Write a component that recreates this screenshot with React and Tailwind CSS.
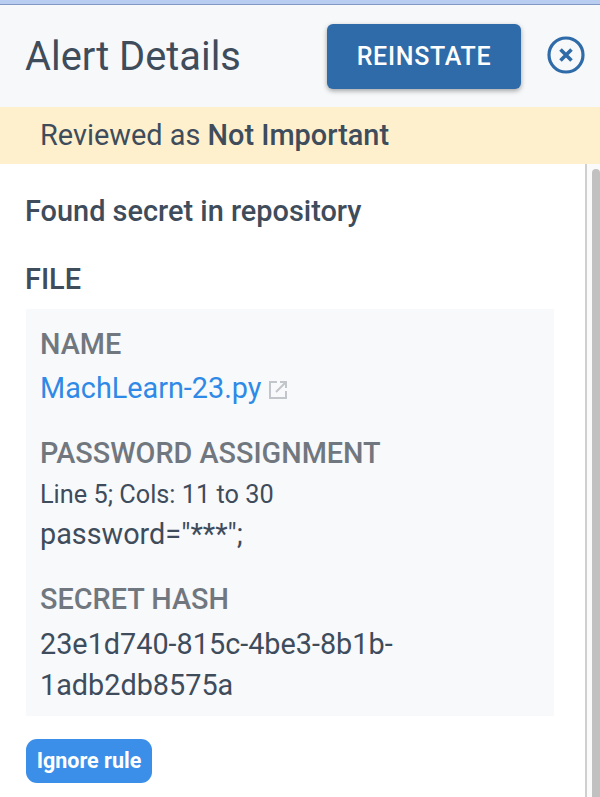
export default function App() {
  return (
    <div className="h-[797px] w-[600px] overflow-hidden bg-white font-['Roboto',sans-serif] text-[#3e4c5b]">
      {/* top strip */}
      <div className="h-[5px] border-b border-[#8199c4] bg-[#b9cdf1]" />

      {/* header */}
      <div className="flex h-[102px] items-center bg-[#f7f8fa] pl-[25px]">
        <h1 className="mt-[2px] w-[302px] text-[39.8px] leading-none font-normal">Alert Details</h1>
        <button className="mt-[1px] h-[65px] w-[194px] rounded-[6px] bg-[#2f6ba8] text-[25px] font-medium tracking-[0.7px] text-white shadow-[0_2px_5px_rgba(0,0,0,0.35)]">
          REINSTATE
        </button>
        <svg className="mb-[2px] ml-[26px]" width="38" height="38" viewBox="0 0 38 38" fill="none" stroke="#2f6ba8">
          <circle cx="19" cy="19" r="17" strokeWidth="3.2" />
          <path d="M13.5 13.5L24.5 24.5M24.5 13.5L13.5 24.5" strokeWidth="3.6" />
        </svg>
      </div>

      {/* review banner */}
      <div className="flex h-[57px] items-center bg-[#fef0cd] pl-[40px] text-[28.9px]">
        <span>Reviewed as&nbsp;<span className="font-medium">Not Important</span></span>
      </div>

      <div className="flex h-[633px]">
        {/* content */}
        <div className="w-[585px] pt-[31px] pl-[25px]">
          <h2 className="text-[28.9px] leading-[32px] font-medium">Found secret in repository</h2>
          <h3 className="mt-[36px] text-[28.9px] leading-[32px] font-medium">FILE</h3>

          <div className="mt-[14px] ml-[1px] h-[407px] w-[528px] bg-[#f8f9fb] pt-[19px] pl-[14px]">
            <div className="text-[28.8px] leading-[32px] font-medium text-[#71777f]">NAME</div>
            <div className="mt-[9px] flex items-center leading-[38px]">
              <span className="text-[28.8px] text-[#2f89e6]">MachLearn-23.py</span>
              <svg className="mt-[3px] ml-[7px]" width="20" height="20" viewBox="0 0 20 20" fill="none" stroke="#c2c5c9" strokeWidth="2">
                <path d="M9 2H2V18H18V11" />
                <path d="M8 12L18 2M12 2H18V8" />
              </svg>
            </div>

            <div className="mt-[30px] text-[28.8px] leading-[32px] font-medium text-[#71777f]">PASSWORD ASSIGNMENT</div>
            <div className="mt-[12px] text-[25.3px] leading-[28px]">Line 5; Cols: 11 to 30</div>
            <div className="mt-[6px] text-[28.8px] leading-[38px]">password="***";</div>

            <div className="mt-[30px] text-[28.8px] leading-[32px] font-medium text-[#71777f]">SECRET HASH</div>
            <div className="mt-[9px] w-[400px] text-[28.8px] leading-[41px]">23e1d740-815c-4be3-8b1b-1adb2db8575a</div>
          </div>

          <button className="mt-[23px] ml-[1px] h-[44px] w-[126px] rounded-[11px] bg-[#3b8fe8] text-[21.5px] font-bold text-white">
            Ignore rule
          </button>
        </div>

        {/* scrollbar */}
        <div className="w-[15px] border-l-2 border-[#cfcfcf] bg-[#fafafa] pt-[5px] pl-[5px]">
          <div className="h-full rounded-t-[8px] bg-[#c1c1c1]" />
        </div>
      </div>
    </div>
  );
}
